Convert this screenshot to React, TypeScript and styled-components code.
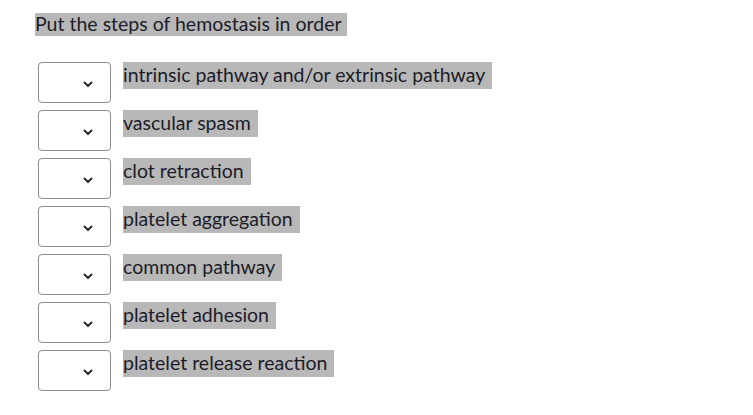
import React from "react";
import styled, { createGlobalStyle } from "styled-components";

const steps = [
    "intrinsic pathway and/or extrinsic pathway",
    "vascular spasm",
    "clot retraction",
    "platelet aggregation",
    "common pathway",
    "platelet adhesion",
    "platelet release reaction",
];

const GlobalStyle = createGlobalStyle`
    body {
        margin: 0;
        background: #ffffff;
        font-family: Lato, "Liberation Sans", sans-serif;
        color: #1c1c28;
    }
`;

const Chevron: React.FC = () => (
    <svg width="10" height="7" viewBox="0 0 10 7">
        <path
            d="M1.5 1.5 L5 5 L8.5 1.5"
            fill="none"
            stroke="#222"
            strokeWidth="1.8"
            strokeLinecap="round"
            strokeLinejoin="round"
        />
    </svg>
);

const App: React.FC = () => {
    return (
        <Page>
            <GlobalStyle />
            <Question>
                <Highlight>Put the steps of hemostasis in order </Highlight>
            </Question>
            <List>
                {steps.map((step) => (
                    <Row key={step}>
                        <Select>
                            <Chevron />
                        </Select>
                        <Label>{step} </Label>
                    </Row>
                ))}
            </List>
        </Page>
    );
};

const Page = styled.div`
    padding: 13px 0 0 35px;
`;

const Question = styled.div`
    font-size: 19.5px;
    line-height: 22px;
    height: 23px;
`;

const Highlight = styled.span`
    display: inline-block;
    height: 23px;
    background: #b8b8b8;
    white-space: pre;
    padding-right: 1px;
`;

const List = styled.div`
    display: flex;
    flex-direction: column;
    gap: 7px;
    margin-top: 26px;
    padding-left: 3px;
`;

const Row = styled.div`
    display: flex;
    align-items: flex-start;
    gap: 12px;
`;

const Select = styled.div`
    box-sizing: border-box;
    width: 73px;
    height: 41px;
    border: 1px solid #8c8c8c;
    border-radius: 4px;
    display: flex;
    align-items: center;
    justify-content: flex-end;
    padding: 4px 17px 0 0;
`;

const Label = styled.span`
    background: #b8b8b8;
    font-size: 19.5px;
    line-height: 26px;
    padding-bottom: 1px;
    white-space: pre;
    padding-right: 2px;
`;

export default App;
